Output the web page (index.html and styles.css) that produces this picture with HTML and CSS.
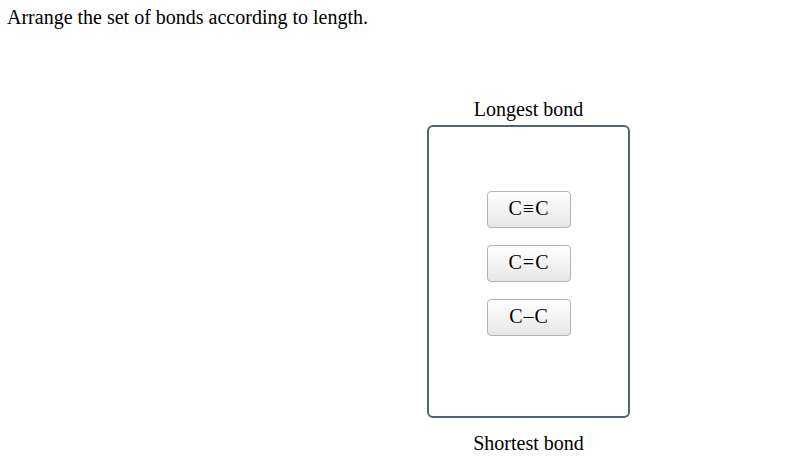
FILE: index.html
```html
<!DOCTYPE html>
<html lang="en">
<head>
<meta charset="utf-8">
<title>Arrange bonds</title>
<link rel="stylesheet" href="styles.css">
</head>
<body>
  <p class="prompt">Arrange the set of bonds according to length.</p>
  <div class="sorter">
    <div class="sorter-col">
      <div class="label label-top">Longest bond</div>
      <div class="bin">
        <div class="chip">C&#8801;C</div>
        <div class="chip">C=C</div>
        <div class="chip">C&#8211;C</div>
      </div>
      <div class="label label-bottom">Shortest bond</div>
    </div>
  </div>
</body>
</html>
```
FILE: styles.css
```css
html, body {
  margin: 0;
  padding: 0;
  background: #ffffff;
}

body {
  font-family: "Liberation Serif", "Times New Roman", serif;
  font-size: 20px;
  line-height: 22px;
  color: #000000;
  width: 807px;
  height: 462px;
  overflow: hidden;
}

.prompt {
  margin: 0;
  padding: 6px 0 0 7px;
}

.sorter {
  display: flex;
  padding-left: 427px;
  margin-top: 70px;
}

.sorter-col {
  display: flex;
  flex-direction: column;
  align-items: center;
  width: 203px;
}

.label {
  text-align: center;
  white-space: nowrap;
}

.label-top {
  margin-bottom: 5px;
}

.label-bottom {
  margin-top: 14px;
}

.bin {
  box-sizing: border-box;
  width: 203px;
  height: 293px;
  border: 2px solid #536275;
  border-radius: 6px;
  display: flex;
  flex-direction: column;
  align-items: center;
  gap: 17px;
  padding-top: 64px;
}

.chip {
  box-sizing: border-box;
  width: 84px;
  height: 37px;
  border: 1px solid #b4b4b4;
  border-radius: 4px;
  background: linear-gradient(to bottom, #ffffff 0%, #f3f3f3 50%, #e6e6e6 100%);
  display: flex;
  align-items: center;
  justify-content: center;
  padding: 0 0 3px 1px;
  font-size: 20px;
  letter-spacing: 1px;
}
```
